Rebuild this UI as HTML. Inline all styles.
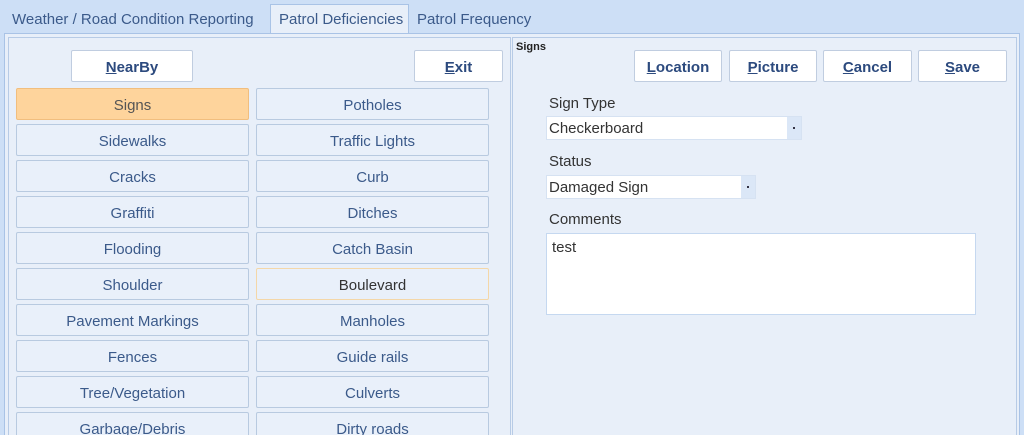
<!DOCTYPE html>
<html><head><meta charset="utf-8"><style>
*{box-sizing:border-box;margin:0;padding:0}
html,body{width:1024px;height:435px;overflow:hidden}
body{background:#cddff6;font-family:"Liberation Sans",sans-serif;position:relative}
.a{position:absolute}
.tab{position:absolute;top:6px;height:28px;font-size:15px;color:#3b5a8a;line-height:28px;padding:0 8px;white-space:nowrap}
.frame{left:4px;top:33px;width:1016px;height:410px;border:1px solid #a9c3e6;background:#e8eff9}
.inner{border:1px solid #b7cbe6}
.btn{position:absolute;height:32px;border:1px solid #b8cae0;border-radius:2px;background:#e9f0fa;color:#3b5a8a;font-size:15px;text-align:center;line-height:33px}
.wb{position:absolute;height:32px;border:1px solid #c0cde0;border-radius:2px;background:#fff;color:#2c4a7e;font-size:15px;font-weight:bold;text-align:center;line-height:33px}
.lbl{position:absolute;font-size:15px;color:#333}
.cb{position:absolute;height:24px;background:#fff;border:1px solid #d6e2f2;font-size:15px;color:#333;line-height:24px;padding-left:2px}
.cb i{position:absolute;right:0;top:0;width:14px;height:22px;background:#dbe7f7}
.cb i:after{content:"";position:absolute;left:6px;top:10px;width:2px;height:2px;background:#334}
</style></head><body>
<div class="tab" style="left:4px">Weather / Road Condition Reporting</div>
<div class="tab" style="left:270px;width:139px;top:4px;height:30px;background:#e8eff9;border:1px solid #a9c3e6;border-bottom:none;line-height:30px">Patrol Deficiencies</div>
<div class="tab" style="left:409px">Patrol Frequency</div>
<div class="a frame"></div>
<div class="a inner" style="left:8px;top:37px;width:503px;height:410px"></div>
<div class="a inner" style="left:512px;top:37px;width:505px;height:410px"></div>
<div class="wb" style="left:71px;top:50px;width:122px"><u>N</u>earBy</div>
<div class="wb" style="left:414px;top:50px;width:89px"><u>E</u>xit</div>
<div class="a" style="left:516px;top:41px;font-size:11px;font-weight:bold;color:#222">Signs</div>
<div class="wb" style="left:634px;top:50px;width:88px"><u>L</u>ocation</div>
<div class="wb" style="left:729px;top:50px;width:88px"><u>P</u>icture</div>
<div class="wb" style="left:823px;top:50px;width:89px"><u>C</u>ancel</div>
<div class="wb" style="left:918px;top:50px;width:89px"><u>S</u>ave</div>

<div class="btn" style="left:16px;top:88px;width:233px;background:#fed49c;border-color:#f1be7e;color:#555">Signs</div>
<div class="btn" style="left:256px;top:88px;width:233px">Potholes</div>
<div class="btn" style="left:16px;top:124px;width:233px">Sidewalks</div>
<div class="btn" style="left:256px;top:124px;width:233px">Traffic Lights</div>
<div class="btn" style="left:16px;top:160px;width:233px">Cracks</div>
<div class="btn" style="left:256px;top:160px;width:233px">Curb</div>
<div class="btn" style="left:16px;top:196px;width:233px">Graffiti</div>
<div class="btn" style="left:256px;top:196px;width:233px">Ditches</div>
<div class="btn" style="left:16px;top:232px;width:233px">Flooding</div>
<div class="btn" style="left:256px;top:232px;width:233px">Catch Basin</div>
<div class="btn" style="left:16px;top:268px;width:233px">Shoulder</div>
<div class="btn" style="left:256px;top:268px;width:233px;border-color:#f4d7a8;color:#333">Boulevard</div>
<div class="btn" style="left:16px;top:304px;width:233px">Pavement Markings</div>
<div class="btn" style="left:256px;top:304px;width:233px">Manholes</div>
<div class="btn" style="left:16px;top:340px;width:233px">Fences</div>
<div class="btn" style="left:256px;top:340px;width:233px">Guide rails</div>
<div class="btn" style="left:16px;top:376px;width:233px">Tree/Vegetation</div>
<div class="btn" style="left:256px;top:376px;width:233px">Culverts</div>
<div class="btn" style="left:16px;top:412px;width:233px">Garbage/Debris</div>
<div class="btn" style="left:256px;top:412px;width:233px">Dirty roads</div>

<div class="lbl" style="left:549px;top:95px">Sign Type</div>
<div class="cb" style="left:546px;top:116px;width:256px">Checkerboard<i></i></div>
<div class="lbl" style="left:549px;top:153px">Status</div>
<div class="cb" style="left:546px;top:175px;width:210px">Damaged Sign<i></i></div>
<div class="lbl" style="left:549px;top:211px">Comments</div>
<div class="a" style="left:546px;top:233px;width:430px;height:82px;background:#fff;border:1px solid #c5d8f0;font-size:15px;color:#333;padding:5px 5px">test</div>
</body></html>
